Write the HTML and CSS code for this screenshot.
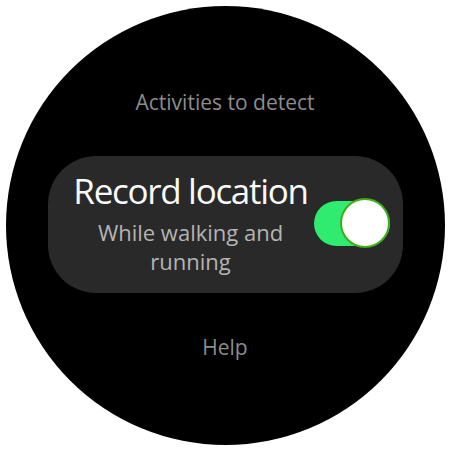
FILE: index.html
```html
<!DOCTYPE html>
<html lang="en">
<head>
  <meta charset="UTF-8" />
  <title>Activities to detect</title>
  <link rel="stylesheet" href="styles.css">
</head>
<body>
  <div class="watch">
    <div class="screen-title">Activities to detect</div>

    <div class="setting-card">
      <div class="setting-text">
        <div class="setting-name">Record location</div>
        <div class="setting-desc">While walking and running</div>
      </div>
      <div class="switch on">
        <div class="switch-knob"></div>
      </div>
    </div>

    <div class="help-link">Help</div>
  </div>
</body>
</html>
```

FILE: styles.css
```css
body {
  margin: 0;
  background: #ffffff;
  font-family: "Open Sans", "Noto Sans", sans-serif;
  display: flex;
  justify-content: center;
  padding-top: 6px;
}
.watch {
  width: 439px;
  height: 439px;
  border-radius: 50%;
  background: #000000;
  display: flex;
  flex-direction: column;
  align-items: center;
  box-sizing: border-box;
  padding-top: 82px;
}
.screen-title {
  color: #8c8c8c;
  font-size: 21px;
  line-height: 28px;
}
.setting-card {
  width: 355px;
  box-sizing: border-box;
  margin-top: 40px;
  padding: 15px 13px 17px 20px;
  background: #292929;
  border-radius: 48px;
  display: flex;
  align-items: center;
}
.setting-text {
  flex: 1;
  text-align: center;
}
.setting-name {
  color: #fafafa;
  font-size: 35px;
  line-height: 40px;
  letter-spacing: -1.3px;
  white-space: nowrap;
}
.setting-desc {
  color: #b4b4b4;
  font-size: 22px;
  line-height: 29px;
  margin-top: 7px;
  padding: 0 30px;
}
.switch {
  position: relative;
  width: 76px;
  height: 45px;
  border-radius: 23px;
  background: #2fec70;
}
.switch-knob {
  position: absolute;
  right: 0;
  top: -3px;
  width: 50px;
  height: 50px;
  box-sizing: border-box;
  border-radius: 50%;
  background: #ffffff;
  border: 2px solid #3cae18;
}
.help-link {
  color: #8c8c8c;
  font-size: 21px;
  line-height: 28px;
  margin-top: 40px;
}
```
